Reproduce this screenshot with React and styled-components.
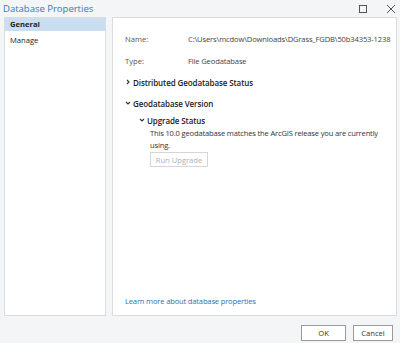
import React from "react";
import styled, { createGlobalStyle } from "styled-components";

const Global = createGlobalStyle`
  html, body { margin: 0; padding: 0; }
  body { font-family: "Open Sans", "Noto Sans", sans-serif; }
`;

const Window = styled.div`
  width: 400px;
  height: 343px;
  background: #f4f5f6;
  display: flex;
  flex-direction: column;
  box-sizing: border-box;
  overflow: hidden;
`;

const TitleBar = styled.div`
  height: 17px;
  flex: 0 0 17px;
  display: flex;
  align-items: center;
  gap: 10px;
  padding: 0 0 0 3px;
`;

const Title = styled.div`
  flex: 1;
  font-size: 9.5px;
  color: #2a7bbf;
  line-height: 17px;
  margin-top: -1px;
`;

const WinButton = styled.div`
  width: 18px;
  height: 17px;
  display: flex;
  align-items: center;
  justify-content: center;
`;

const Body = styled.div`
  display: flex;
  gap: 6px;
  padding: 0 3px 0 4px;
  height: 299px;
  flex: 0 0 299px;
`;

const Nav = styled.div`
  flex: 0 0 102px;
  background: #fff;
  border: 1px solid #dcdcdc;
  box-sizing: border-box;
  display: flex;
  flex-direction: column;
`;

const NavItem = styled.div`
  height: ${(p) => (p.$active ? 13 : 17)}px;
  line-height: ${(p) => (p.$active ? 13 : 17)}px;
  padding-left: 5px;
  font-size: 7.6px;
  color: #222;
  font-weight: ${(p) => (p.$active ? 700 : 400)};
  background: ${(p) => (p.$active ? "#c9def1" : "transparent")};
  margin-top: ${(p) => (p.$active ? 0 : 1)}px;
`;

const Panel = styled.div`
  flex: 1;
  min-width: 0;
  background: #fff;
  border: 1px solid #dcdcdc;
  box-sizing: border-box;
  display: flex;
  flex-direction: column;
  padding: 14px 4px 8px 12px;
  font-size: 7.6px;
  color: #333;
`;

const Row = styled.div`
  display: flex;
  height: 14px;
  line-height: 14px;
  margin-bottom: ${(p) => p.$mb || 0}px;
`;

const Label = styled.div`
  flex: 0 0 63px;
  color: #555;
`;

const Value = styled.div`
  color: #444;
  white-space: nowrap;
  letter-spacing: -0.15px;
`;

const Section = styled.div`
  display: flex;
  align-items: center;
  gap: 2px;
  height: 14px;
  font-size: 8px;
  font-weight: 600;
  color: #222;
  letter-spacing: -0.1px;
  margin-left: ${(p) => p.$indent || 0}px;
  margin-bottom: ${(p) => p.$mb || 0}px;
`;

const Desc = styled.div`
  margin-left: 25px;
  line-height: 12px;
  color: #333;
  white-space: nowrap;
  letter-spacing: -0.18px;
`;

const DisabledButton = styled.div`
  margin: 1px 0 0 25px;
  width: 58px;
  height: 15px;
  box-sizing: border-box;
  border: 1px solid #d6d6d6;
  color: #b0b0b0;
  font-size: 7.6px;
  display: flex;
  align-items: center;
  justify-content: center;
`;

const Link = styled.div`
  margin-top: auto;
  color: #2a72b5;
  line-height: 12px;
  letter-spacing: -0.18px;
`;

const Footer = styled.div`
  display: flex;
  justify-content: flex-end;
  gap: 7px;
  padding: 9px 7px 0 0;
`;

const Button = styled.div`
  width: ${(p) => p.$w}px;
  height: 16px;
  box-sizing: border-box;
  border: 1px solid #9a9a9a;
  background: #fff;
  font-size: 7.6px;
  color: #333;
  display: flex;
  align-items: center;
  justify-content: center;
`;

const Chevron = ({ open }) => (
  <svg width="6" height="6" viewBox="0 0 6 6">
    {open ? (
      <path d="M1 2 L3 4 L5 2" fill="none" stroke="#333" strokeWidth="1.1" />
    ) : (
      <path d="M2 1 L4 3 L2 5" fill="none" stroke="#333" strokeWidth="1.1" />
    )}
  </svg>
);

export default function App() {
  return (
    <Window>
      <Global />
      <TitleBar>
        <Title>Database Properties</Title>
        <WinButton>
          <svg width="10" height="10" viewBox="0 0 10 10">
            <rect x="1.5" y="1.5" width="7" height="7" fill="none" stroke="#555" strokeWidth="1" />
          </svg>
        </WinButton>
        <WinButton>
          <svg width="10" height="10" viewBox="0 0 10 10">
            <path d="M1 1 L9 9 M9 1 L1 9" stroke="#555" strokeWidth="1" />
          </svg>
        </WinButton>
      </TitleBar>
      <Body>
        <Nav>
          <NavItem $active>General</NavItem>
          <NavItem>Manage</NavItem>
        </Nav>
        <Panel>
          <Row $mb={8}>
            <Label>Name:</Label>
            <Value>C:\Users\mcdow\Downloads\DGrass_FGDB\50b34353-1238</Value>
          </Row>
          <Row $mb={7}>
            <Label>Type:</Label>
            <Value>File Geodatabase</Value>
          </Row>
          <Section $mb={7}>
            <Chevron />
            Distributed Geodatabase Status
          </Section>
          <Section $mb={3}>
            <Chevron open />
            Geodatabase Version
          </Section>
          <Section $indent={14}>
            <Chevron open />
            Upgrade Status
          </Section>
          <Desc>
            This 10.0 geodatabase matches the ArcGIS release you are currently
            <br />
            using.
          </Desc>
          <DisabledButton>Run Upgrade</DisabledButton>
          <Link>Learn more about database properties</Link>
        </Panel>
      </Body>
      <Footer>
        <Button $w={45}>OK</Button>
        <Button $w={40}>Cancel</Button>
      </Footer>
    </Window>
  );
}
